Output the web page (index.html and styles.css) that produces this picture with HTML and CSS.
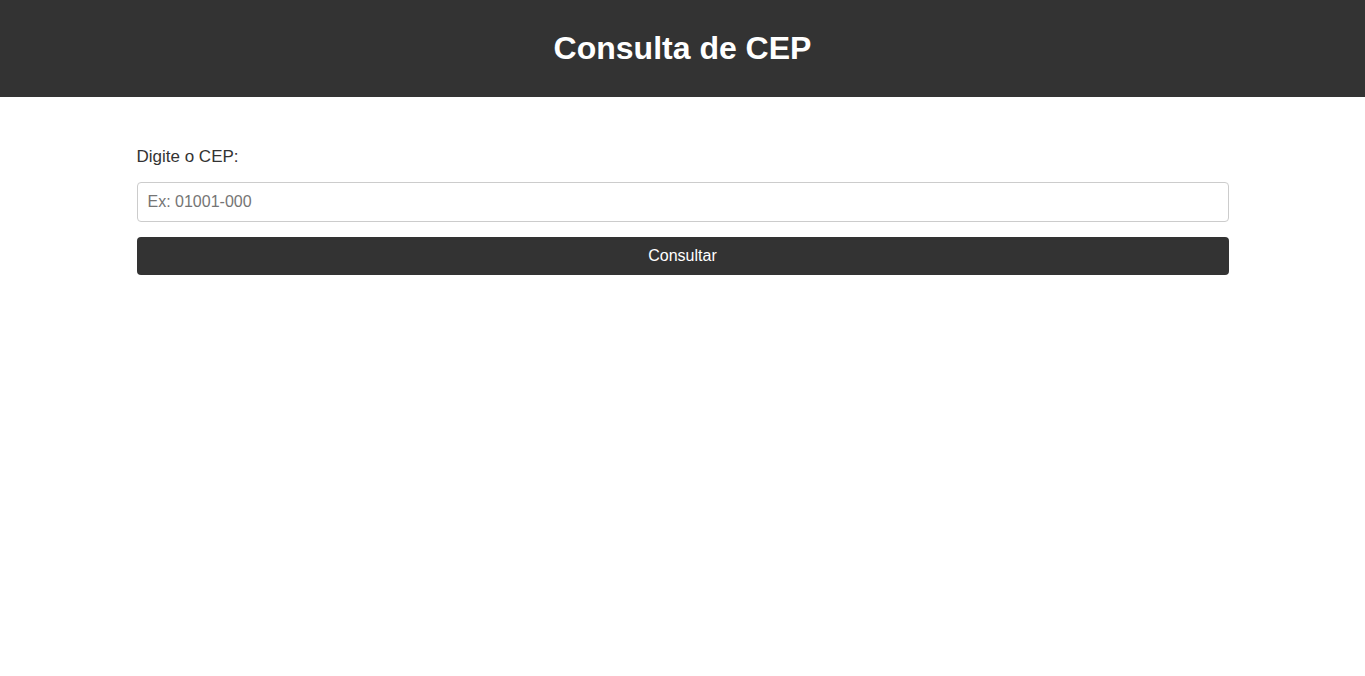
FILE: index.html
```html
<!DOCTYPE html>
<html lang="pt-BR">
<head>
<meta charset="UTF-8">
<title>Consulta de CEP</title>
<link rel="stylesheet" href="styles.css">
</head>
<body>
<header class="header">
  <h1 class="title">Consulta de CEP</h1>
</header>
<main class="container">
  <label class="label" for="cep">Digite o CEP:</label>
  <input class="input" id="cep" type="text" placeholder="Ex: 01001-000">
  <button class="button" type="button">Consultar</button>
</main>
</body>
</html>
```
FILE: styles.css
```css
* { box-sizing: border-box; }
body {
  margin: 0;
  font-family: "Liberation Sans", Arial, sans-serif;
  background: #fff;
  color: #333;
}
.header {
  background: #333;
  color: #fff;
  height: 97px;
  display: flex;
  align-items: center;
  justify-content: center;
}
.title {
  margin: 0;
  font-size: 32px;
  font-weight: bold;
  line-height: 37px;
}
.container {
  width: 80%;
  margin: 50px auto 0;
  display: flex;
  flex-direction: column;
}
.label {
  font-size: 17px;
  line-height: 20px;
  margin-bottom: 15px;
}
.input {
  height: 40px;
  padding: 10px;
  font-size: 16px;
  font-family: inherit;
  border: 1px solid #ccc;
  border-radius: 4px;
  color: #333;
}
.input::placeholder { color: #757575; }
.button {
  margin-top: 15px;
  height: 38px;
  background: #333;
  color: #fff;
  border: none;
  border-radius: 4px;
  font-size: 16px;
  font-family: inherit;
  cursor: pointer;
}
```
